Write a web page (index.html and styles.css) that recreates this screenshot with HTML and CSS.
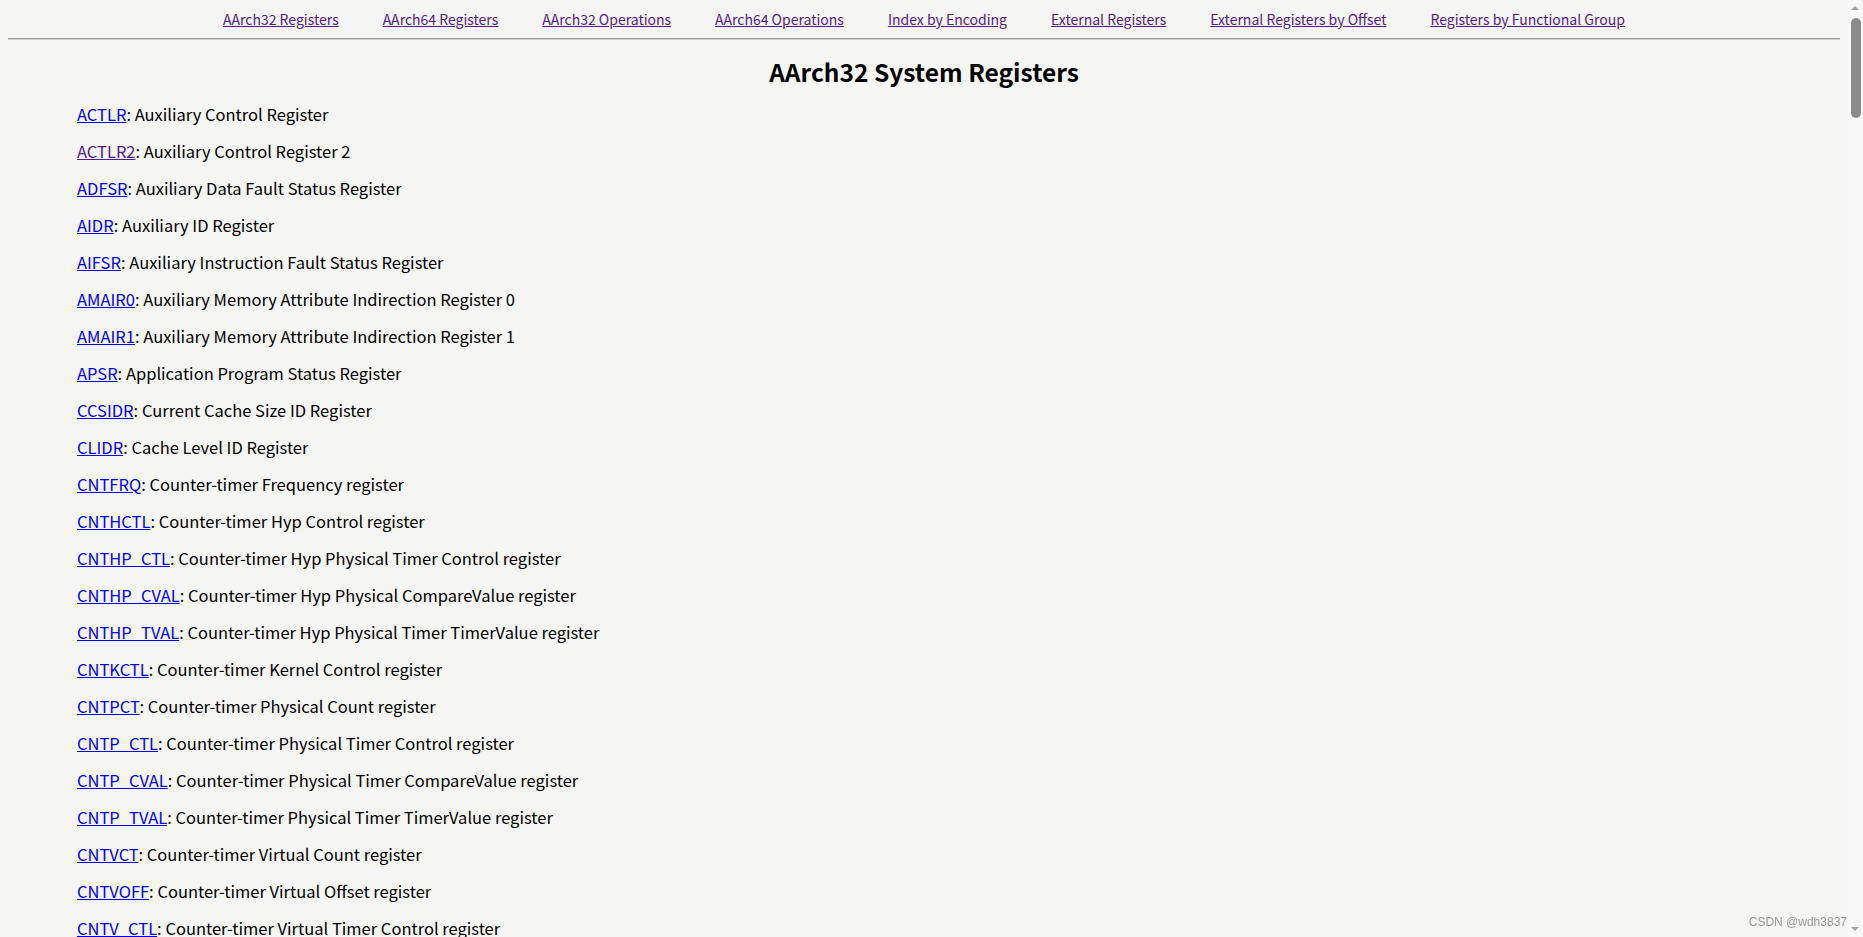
FILE: index.html
```html
<!DOCTYPE html>
<html>
<head>
    <title>AArch32 System Registers</title>
    <link rel="stylesheet" href="styles.css">
</head>
<body>
<div class="page">
    <div class="topbar">
        <a class="visited" href="#">AArch32 Registers</a>
        <a class="visited" href="#">AArch64 Registers</a>
        <a class="visited" href="#">AArch32 Operations</a>
        <a class="visited" href="#">AArch64 Operations</a>
        <a class="visited" href="#">Index by Encoding</a>
        <a class="visited" href="#">External Registers</a>
        <a class="visited" href="#">External Registers by Offset</a>
        <a class="visited" href="#">Registers by Functional Group</a>
    </div>
    <hr class="bottom-line">
    <h1 class="register-section">AArch32 System Registers</h1>
    <div class="reglist">
        <p><a href="#">ACTLR</a>: Auxiliary Control Register</p>
        <p><a class="visited" href="#">ACTLR2</a>: Auxiliary Control Register 2</p>
        <p><a href="#">ADFSR</a>: Auxiliary Data Fault Status Register</p>
        <p><a href="#">AIDR</a>: Auxiliary ID Register</p>
        <p><a href="#">AIFSR</a>: Auxiliary Instruction Fault Status Register</p>
        <p><a href="#">AMAIR0</a>: Auxiliary Memory Attribute Indirection Register 0</p>
        <p><a href="#">AMAIR1</a>: Auxiliary Memory Attribute Indirection Register 1</p>
        <p><a href="#">APSR</a>: Application Program Status Register</p>
        <p><a href="#">CCSIDR</a>: Current Cache Size ID Register</p>
        <p><a href="#">CLIDR</a>: Cache Level ID Register</p>
        <p><a href="#">CNTFRQ</a>: Counter-timer Frequency register</p>
        <p><a href="#">CNTHCTL</a>: Counter-timer Hyp Control register</p>
        <p><a href="#">CNTHP_CTL</a>: Counter-timer Hyp Physical Timer Control register</p>
        <p><a href="#">CNTHP_CVAL</a>: Counter-timer Hyp Physical CompareValue register</p>
        <p><a href="#">CNTHP_TVAL</a>: Counter-timer Hyp Physical Timer TimerValue register</p>
        <p><a href="#">CNTKCTL</a>: Counter-timer Kernel Control register</p>
        <p><a href="#">CNTPCT</a>: Counter-timer Physical Count register</p>
        <p><a href="#">CNTP_CTL</a>: Counter-timer Physical Timer Control register</p>
        <p><a href="#">CNTP_CVAL</a>: Counter-timer Physical Timer CompareValue register</p>
        <p><a href="#">CNTP_TVAL</a>: Counter-timer Physical Timer TimerValue register</p>
        <p><a href="#">CNTVCT</a>: Counter-timer Virtual Count register</p>
        <p><a href="#">CNTVOFF</a>: Counter-timer Virtual Offset register</p>
        <p><a href="#">CNTV_CTL</a>: Counter-timer Virtual Timer Control register</p>
    </div>
</div>
<!-- window scrollbar, drawn by hand -->
<div class="scrollbar">
    <div class="arrow-up"></div>
    <div class="thumb"></div>
    <div class="arrow-down"></div>
</div>
<div class="watermark">CSDN @wdh3837</div>
</body>
</html>
```

FILE: styles.css
```css
html {
    height: 100%;
    overflow: hidden;
}

body {
    margin: 0;
    background-color: #f5f5f4;
    color: #000;
    font-family: "Noto Sans CJK SC", "Noto Sans", sans-serif;
}

.page {
    margin: 8px 23px 8px 8px;
}

a {
    color: #0000ee;
}

a.visited {
    color: #551a8b;
}

.topbar {
    display: flex;
    justify-content: center;
    gap: 44px;
    padding: 2px 0 10px 0;
    font-size: 14px;
    line-height: 18px;
}

.bottom-line {
    margin: 0;
    border: 0;
    border-top: 1px solid #9a9a9a;
    border-bottom: 1px solid #d0d0d0;
}

.register-section {
    margin: 16px 0;
    text-align: center;
    font-size: 24.5px;
    line-height: 32px;
    font-weight: bold;
}

.reglist {
    margin-left: 69px;
}

.reglist p {
    margin: 16px 0;
    font-size: 16.5px;
    line-height: 21px;
}

.scrollbar {
    position: fixed;
    top: 0;
    right: 0;
    width: 15px;
    height: 100%;
    background-color: #f8f8f8;
}

.arrow-up {
    position: absolute;
    top: 6px;
    left: 3px;
    border-left: 4px solid transparent;
    border-right: 4px solid transparent;
    border-bottom: 4px solid #a3a3a3;
}

.thumb {
    position: absolute;
    top: 18px;
    left: 3px;
    width: 10px;
    height: 100px;
    border-radius: 5px;
    background-color: #8b8b8b;
}

.arrow-down {
    position: absolute;
    bottom: 6px;
    left: 3px;
    border-left: 4px solid transparent;
    border-right: 4px solid transparent;
    border-top: 4px solid #a3a3a3;
}

.watermark {
    position: fixed;
    right: 16px;
    bottom: 8px;
    color: #999;
    font-family: "Liberation Sans", Arial, sans-serif;
    font-size: 12px;
}
```
